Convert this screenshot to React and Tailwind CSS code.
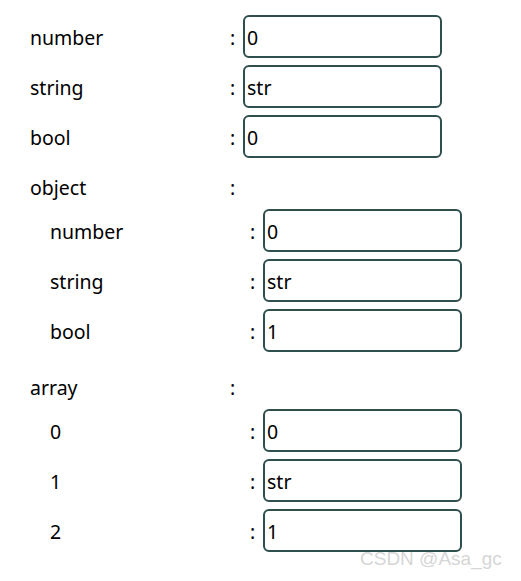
import React, { useState } from "react";

const initial = {
  number: "0",
  string: "str",
  bool: "0",
  object: { number: "0", string: "str", bool: "1" },
  array: ["0", "str", "1"],
};

function Field({ label, value, onChange, nested }) {
  return (
    <div className={`flex items-center h-[43px] ${nested ? "pl-[20px]" : ""}`}>
      <span className="w-[200px] shrink-0 pt-[3px]">{label}</span>
      <span className="w-[13px] shrink-0 pt-[3px]">:</span>
      <input
        value={value}
        onChange={(e) => onChange(e.target.value)}
        className="w-[199px] h-[43px] px-[2px] pt-[2px] border-2 border-[#2f4f4f] rounded-[6px] bg-white text-black outline-none"
      />
    </div>
  );
}

function Group({ label, children }) {
  return (
    <div className="flex flex-col">
      <div className="flex items-center h-[43px]">
        <span className="w-[200px] shrink-0 pt-[3px]">{label}</span>
        <span className="pt-[3px]">:</span>
      </div>
      <div className="flex flex-col gap-[7px] mt-[1px] mb-[6px]">{children}</div>
    </div>
  );
}

export default function App() {
  const [data, setData] = useState(initial);

  const setTop = (key) => (v) => setData((d) => ({ ...d, [key]: v }));
  const setObj = (key) => (v) => setData((d) => ({ ...d, object: { ...d.object, [key]: v } }));
  const setArr = (i) => (v) =>
    setData((d) => ({ ...d, array: d.array.map((x, j) => (j === i ? v : x)) }));

  return (
    <div
      className="relative w-[521px] h-[581px] bg-white text-black text-[19.5px] leading-none pl-[30px] pt-[15px]"
      style={{ fontFamily: '"Noto Sans", "Open Sans", sans-serif' }}
    >
      <div className="flex flex-col gap-[7px]">
        <Field label="number" value={data.number} onChange={setTop("number")} />
        <Field label="string" value={data.string} onChange={setTop("string")} />
        <Field label="bool" value={data.bool} onChange={setTop("bool")} />
        <Group label="object">
          {Object.keys(data.object).map((k) => (
            <Field key={k} nested label={k} value={data.object[k]} onChange={setObj(k)} />
          ))}
        </Group>
        <Group label="array">
          {data.array.map((v, i) => (
            <Field key={i} nested label={String(i)} value={v} onChange={setArr(i)} />
          ))}
        </Group>
      </div>
      <span
        className="absolute left-[360px] top-[549px] text-[19px] text-[#d6d6d6] pointer-events-none"
        style={{ fontFamily: '"Liberation Sans", Arial, sans-serif' }}
      >
        CSDN @Asa_gc
      </span>
    </div>
  );
}
